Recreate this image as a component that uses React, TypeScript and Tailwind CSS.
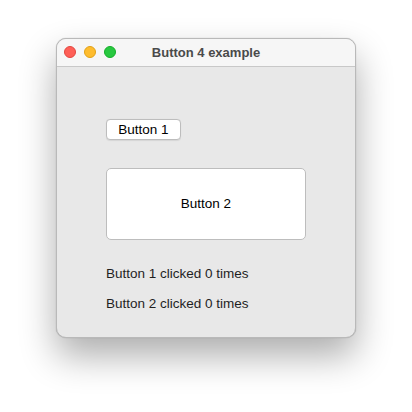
import React, { useState } from 'react';

export default function App() {
  const [c1, setC1] = useState(0);
  const [c2, setC2] = useState(0);

  return (
    <div className="w-[412px] h-[412px] bg-white pt-[38px] pl-[56px] font-['Helvetica_Neue','Liberation_Sans',Arial,sans-serif]">
      <div className="w-[300px] h-[300px] rounded-[10px] overflow-hidden border border-[#b9b9b9] bg-[#e8e8e8] shadow-[0_18px_36px_rgba(0,0,0,0.32),0_0_1px_rgba(0,0,0,0.3)] flex flex-col">
        {/* Title bar */}
        <div className="relative h-[28px] shrink-0 bg-[#f6f6f6] border-b border-[#c8c8c8] flex items-center justify-center">
          <div className="absolute left-[7px] top-[7px] flex gap-[8px]">
            <span className="w-[12px] h-[12px] rounded-full bg-[#fe5f57] border border-[#e2463f]" />
            <span className="w-[12px] h-[12px] rounded-full bg-[#febc2e] border border-[#e1a116]" />
            <span className="w-[12px] h-[12px] rounded-full bg-[#28c840] border border-[#14ae28]" />
          </div>
          <span className="text-[13px] font-bold text-[#4a4a4a]">Button 4 example</span>
        </div>

        {/* Content */}
        <div className="flex flex-col items-start pl-[49px] pt-[52px]">
          <button
            onClick={() => setC1(c1 + 1)}
            className="w-[75px] h-[21px] bg-white rounded-[4px] border border-[#bdbdbd] text-[13.5px] text-black leading-none shadow-[0_0.5px_1px_rgba(0,0,0,0.08)]"
          >
            Button 1
          </button>
          <button
            onClick={() => setC2(c2 + 1)}
            className="mt-[28px] w-[200px] h-[72px] bg-white rounded-[5px] border border-[#bdbdbd] text-[13.5px] text-black leading-none"
          >
            Button 2
          </button>
          <p className="mt-[26px] text-[13.5px] text-[#1f1f1f] leading-[16px]">Button 1 clicked {c1} times</p>
          <p className="mt-[14px] text-[13.5px] text-[#1f1f1f] leading-[16px]">Button 2 clicked {c2} times</p>
        </div>
      </div>
    </div>
  );
}
